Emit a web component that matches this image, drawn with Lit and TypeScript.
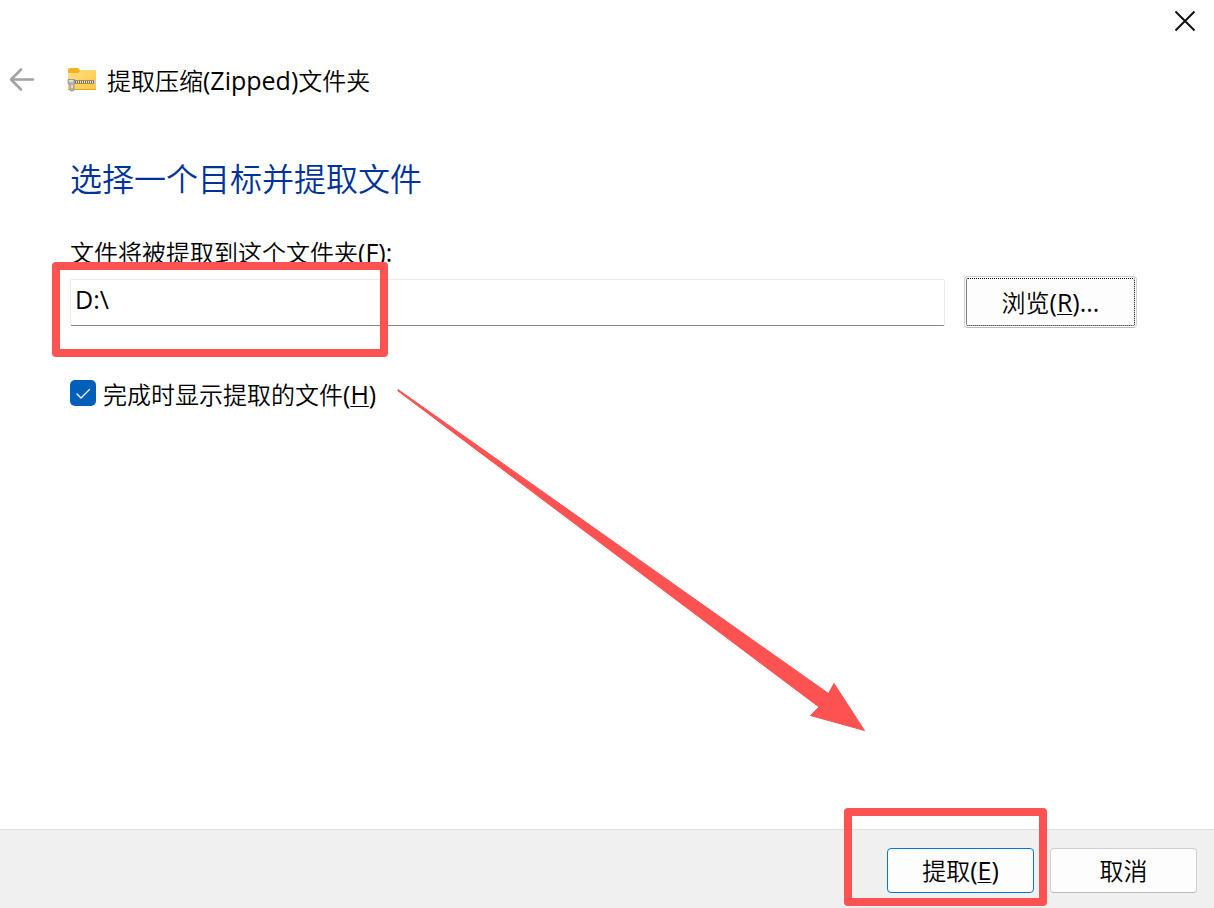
import { LitElement, html, css } from "lit";
import { customElement, property } from "lit/decorators.js";

@customElement("app-root")
export class AppRoot extends LitElement {
  @property() destination = "D:\\";

  static styles = css`
    :host {
      display: flex;
      flex-direction: column;
      min-height: 100vh;
      background: #fff;
      color: #000;
      font: 350 24px/32px "Open Sans", "Noto Sans CJK SC", sans-serif;
    }
    * {
      box-sizing: border-box;
    }
    button,
    input {
      font: inherit;
      color: inherit;
      margin: 0;
    }
    svg {
      display: block;
    }
    .titlebar {
      display: flex;
      justify-content: flex-end;
    }
    .icon-button {
      border: 0;
      padding: 0;
      background: none;
    }
    .close {
      padding: 10px 18px;
    }
    .header {
      display: flex;
      align-items: center;
      padding: 22px 8px 0;
    }
    .back {
      margin-right: 31px;
    }
    .title {
      margin: 0 0 0 10px;
      font-size: 24px;
      line-height: 32px;
      font-weight: inherit;
    }
    .latin,
    .path {
      font-size: 25px;
      font-weight: 400;
    }
    .content {
      position: relative;
      flex: 1;
      padding: 59px 77px 40px 70px;
    }
    h2 {
      margin: 0;
      font-size: 32px;
      line-height: 48px;
      font-weight: inherit;
      color: #003399;
    }
    .field {
      position: relative;
      margin-top: 33px;
    }
    .field label,
    .option label,
    .title {
      display: block;
      height: 32px;
    }
    .row {
      display: flex;
      align-items: center;
      gap: 19px;
      margin-top: 8px;
    }
    .path {
      flex: 1;
      min-width: 0;
      height: 47px;
      padding: 0 4px 7px;
      border: 1px solid #ebebeb;
      border-bottom-color: #868686;
      border-radius: 2px;
      background: #fff;
      outline: none;
    }
    .btn {
      width: 147px;
      height: 45px;
      padding: 0;
      border: 1px solid #d0d0d0;
      border-bottom-color: #bababa;
      border-radius: 4px;
      background: #fdfdfd;
    }
    .browse {
      width: 173px;
      height: 52px;
      outline: 1px dotted #000;
      outline-offset: -3px;
    }
    .primary {
      border-color: #0078d4;
    }
    .option {
      display: flex;
      align-items: center;
      gap: 7px;
      margin-top: 50px;
    }
    .check {
      position: relative;
      display: grid;
      width: 26px;
      height: 26px;
      margin-bottom: 2px;
    }
    .check input {
      appearance: none;
      width: 26px;
      height: 26px;
      border-radius: 5px;
      background: #005fb8;
    }
    .check svg {
      position: absolute;
      inset: 0;
      pointer-events: none;
    }
    .footer {
      display: flex;
      justify-content: flex-end;
      gap: 16px;
      padding: 18px 17px 15px;
      border-top: 1px solid #dfdfdf;
      background: #f0f0f0;
    }
    .action {
      position: relative;
      display: flex;
    }
    .mark {
      position: absolute;
      border: 8px solid #fc5252;
      border-radius: 4px;
      pointer-events: none;
    }
    .mark-path {
      left: -18px;
      top: 26px;
      width: 336px;
      height: 95px;
    }
    .mark-extract {
      inset: -40px -13px -13px -43px;
    }
    .arrow {
      position: absolute;
      left: 390px;
      top: 284px;
      pointer-events: none;
    }
    u {
      text-decoration-thickness: 1px;
      text-underline-offset: 2px;
    }
  `;

  private folderIcon() {
    return html`<svg width="30" height="26" viewBox="0 0 30 26" aria-hidden="true">
      <defs>
        <linearGradient id="front" x1="0" y1="0" x2="1" y2="1">
          <stop offset="0" stop-color="#ffe08a" />
          <stop offset="1" stop-color="#fbc63c" />
        </linearGradient>
      </defs>
      <path d="M1 3a2 2 0 0 1 2-2h8l3 3h13a2 2 0 0 1 2 2v6H1z" fill="#f5b31c" />
      <path d="M1 6h10l3-3h14a1 1 0 0 1 1 1v18a1 1 0 0 1-1 1H2a1 1 0 0 1-1-1z" fill="url(#front)" />
      <path d="M1 22.500h28" stroke="#e5a52a" />
      <path d="M7 15h22" stroke="#f3e4b5" stroke-width="4" />
      <path d="M7 13.500h22M7 16.500h22" stroke="#a08c5c" />
      <path d="M8 15h19" stroke="#77705c" stroke-width="2" stroke-dasharray="1 1" />
      <path d="M27 13h2v4h-2z" fill="#c9c9cb" />
      <path d="M1 12.500h6.500v4l-.5 1V23a1 1 0 0 1-1 1H4a1 1 0 0 1-1-1v-5.500l-2-1z" fill="#b4b4b7" stroke="#85868a" stroke-width=".7" />
      <path d="M2 14h4M5 18v3" stroke="#f1f1f1" stroke-width="1.300" />
    </svg>`;
  }

  render() {
    return html`
      <div class="titlebar">
        <button class="icon-button close" aria-label="关闭">
          <svg width="22" height="22" viewBox="0 0 22 22" fill="none" stroke="#111" stroke-width="2">
            <path d="M1.500 1.500l19 19M20.500 1.500l-19 19" />
          </svg>
        </button>
      </div>
      <header class="header">
        <button class="icon-button back" aria-label="返回">
          <svg width="28" height="28" viewBox="0 0 28 28" fill="none" stroke="#a3a3a3" stroke-width="2.6"
            stroke-linecap="round" stroke-linejoin="round">
            <path d="M13 3.500L3 13.500l10 10M3 13.500h22" />
          </svg>
        </button>
        ${this.folderIcon()}
        <h1 class="title">提取压缩<span class="latin">(Zipped)</span>文件夹</h1>
      </header>
      <main class="content">
        <h2>选择一个目标并提取文件</h2>
        <div class="field">
          <label for="path">文件将被提取到这个文件夹<span class="latin">(<u>F</u>):</span></label>
          <div class="row">
            <input class="path" id="path" type="text" .value=${this.destination} />
            <button class="btn browse">浏览<span class="latin">(<u>R</u>)...</span></button>
          </div>
          <div class="mark mark-path"></div>
        </div>
        <div class="option">
          <span class="check">
            <input id="show" type="checkbox" checked />
            <svg width="26" height="26" viewBox="0 0 26 26" fill="none" stroke="#fff" stroke-width="1.3"
              stroke-linecap="round" stroke-linejoin="round">
              <path d="M7 14l4 4 8.500-8.500" />
            </svg>
          </span>
          <label for="show">完成时显示提取的文件<span class="latin">(<u>H</u>)</span></label>
        </div>
        <svg class="arrow" width="480" height="356" viewBox="0 0 480 356" aria-hidden="true">
          <path d="M8 9.500L438.500 313.500 444 303.500 474.500 350.500 420.500 335.500 429 327 8 11z" fill="#fc5252"
            stroke="#fc5252" stroke-linejoin="round" />
        </svg>
      </main>
      <footer class="footer">
        <div class="action">
          <button class="btn primary">提取<span class="latin">(<u>E</u>)</span></button>
          <div class="mark mark-extract"></div>
        </div>
        <button class="btn">取消</button>
      </footer>
    `;
  }
}
